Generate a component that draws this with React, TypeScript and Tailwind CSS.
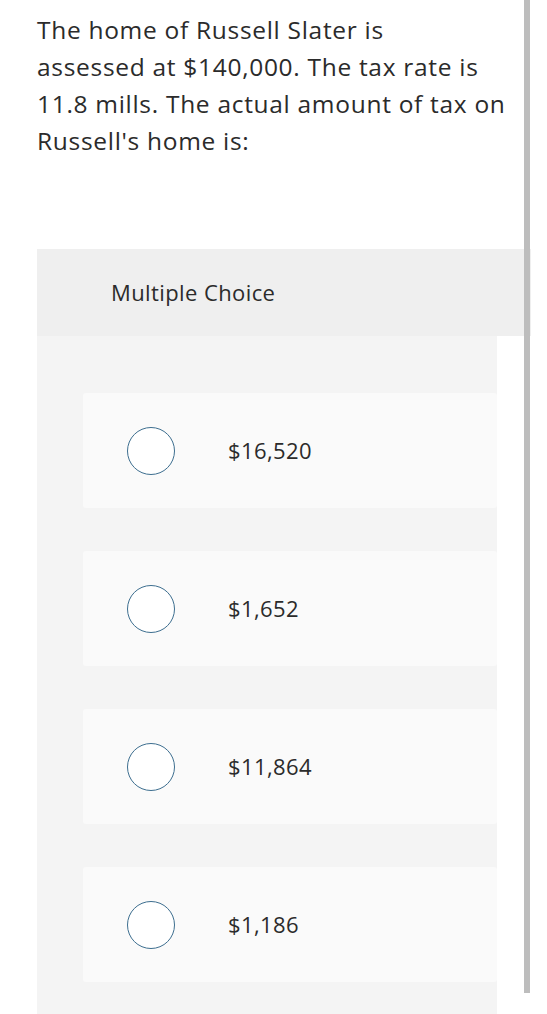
import React from 'react';

const options = ['$16,520', '$1,652', '$11,864', '$1,186'];

const font = { fontFamily: '"Open Sans", "Liberation Sans", sans-serif' };

const App: React.FC = () => {
  return (
    <div className="relative w-[547px] h-[1014px] overflow-hidden bg-white text-[#2b2b2b]" style={font}>
      {/* question */}
      <div className="pl-[37px] pt-[11px] pr-[30px] text-[24.5px] leading-[37px] tracking-[0.7px]">
        The home of Russell Slater is
        <br />
        assessed at $140,000. The tax rate is
        <br />
        11.8 mills. The actual amount of tax on
        <br />
        Russell's home is:
      </div>

      {/* answer panel */}
      <div className="mt-[90px] ml-[37px]">
        <div className="w-[494px] h-[87px] bg-[#efefef] flex items-center pl-[74px] text-[22px] tracking-[0.4px]">
          Multiple Choice
        </div>
        <div className="w-[460px] bg-[#f4f4f4] pt-[57px] pl-[46px] flex flex-col gap-[43px] pb-[40px]">
          {options.map((o) => (
            <div key={o} className="h-[115px] bg-[#fafafa] rounded-[3px] flex items-center pl-[44px]">
              <div className="w-[48px] h-[48px] rounded-full border border-[#3d6e8f] bg-white" />
              <span className="ml-[53px] text-[22px] tracking-[0.4px]">{o}</span>
            </div>
          ))}
        </div>
      </div>

      {/* scrollbar */}
      <div className="absolute left-[524px] top-0 w-[6px] h-[993px] bg-[#bdbdbd]" />
    </div>
  );
};

export default App;
